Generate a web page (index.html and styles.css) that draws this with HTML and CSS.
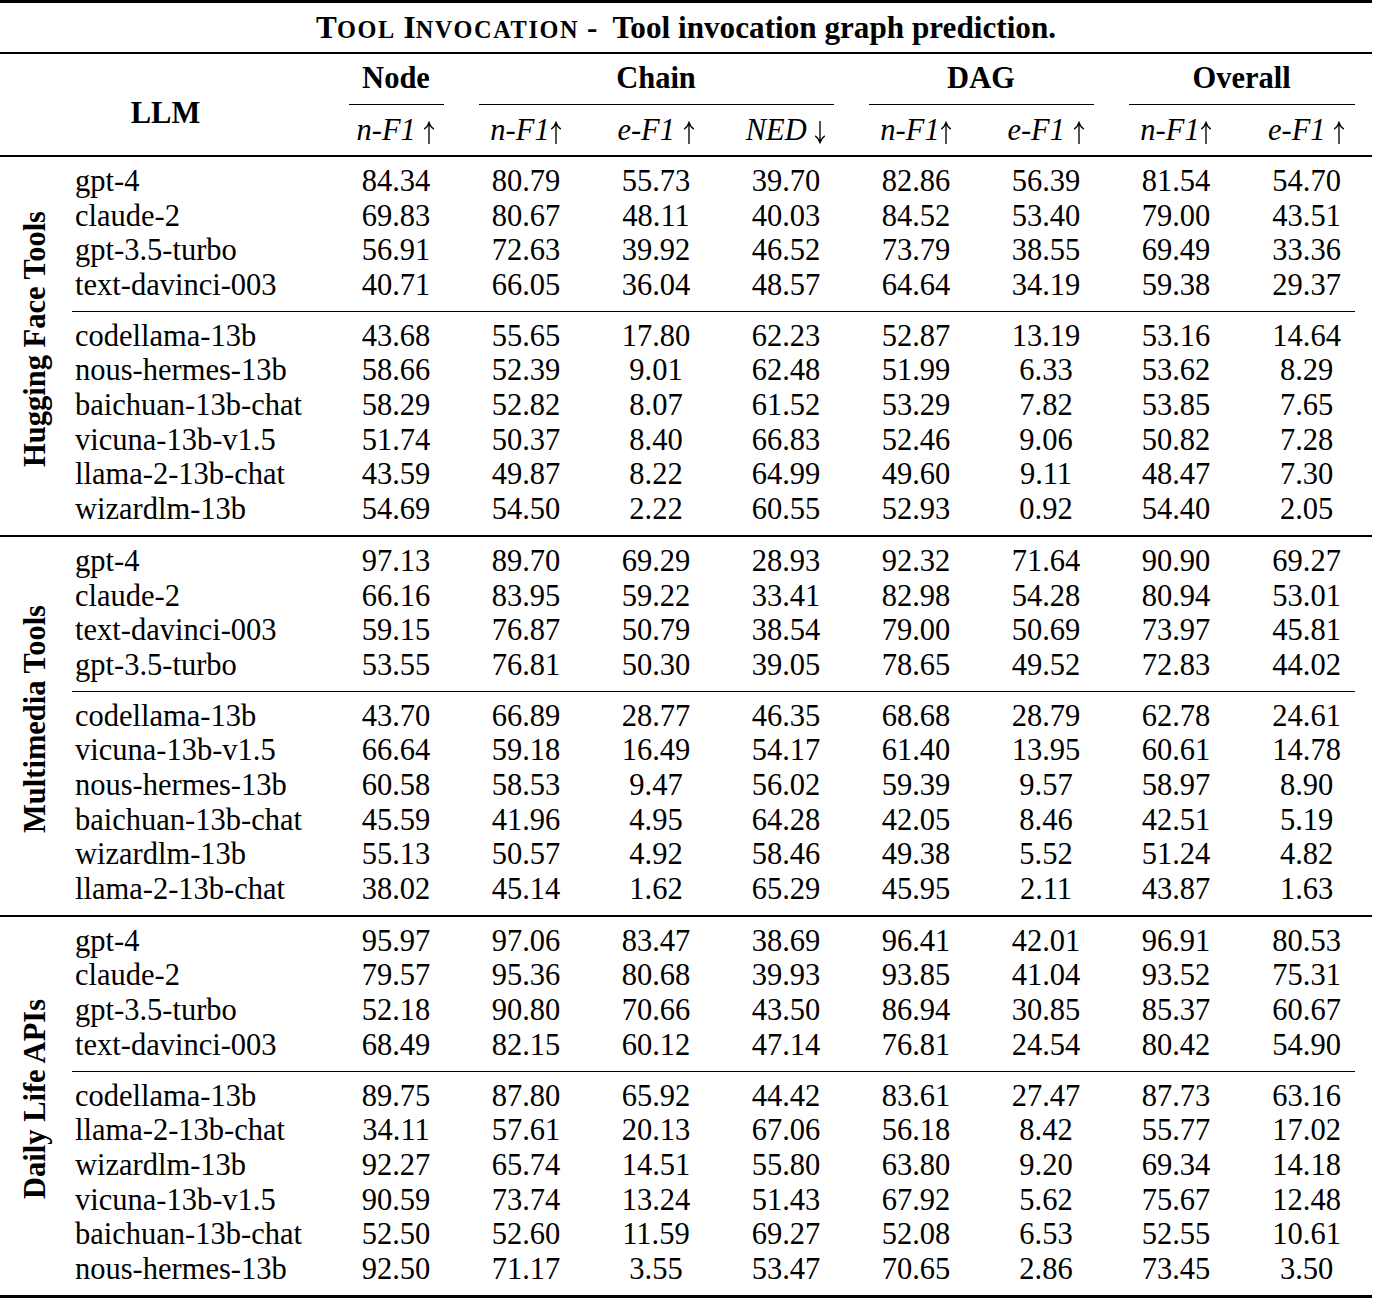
FILE: index.html
```html
<!DOCTYPE html>
<html lang="en">
<head>
    <meta charset="UTF-8">
    <meta name="viewport" content="width=device-width, initial-scale=1.0">
    <title>Tool Invocation - Tool invocation graph prediction</title>
    <link rel="stylesheet" href="styles.css">
</head>
<body>
    <table class="results">
        <colgroup>
            <col class="col-group">
            <col class="col-llm">
            <col class="col-num">
            <col class="col-num">
            <col class="col-num">
            <col class="col-num">
            <col class="col-num">
            <col class="col-num">
            <col class="col-num">
            <col class="col-last">
        </colgroup>
        <thead>
            <tr>
                <th class="title" colspan="10"><span class="sc">T<small>OOL</small> I<small>NVOCATION</small></span> -&nbsp; Tool invocation graph prediction.</th>
            </tr>
            <tr class="head-top">
                <th class="llm-head" colspan="2" rowspan="3">LLM</th>
                <th>Node</th>
                <th colspan="3">Chain</th>
                <th colspan="2">DAG</th>
                <th colspan="2">Overall</th>
            </tr>
            <tr class="cmid">
                <td><div class="trim"></div></td>
                <td colspan="3"><div class="trim"></div></td>
                <td colspan="2"><div class="trim"></div></td>
                <td colspan="2"><div class="trim"></div></td>
            </tr>
            <tr class="head-sub">
                <th><i>n-F1</i> <svg class="arrow" viewBox="0 0 12 24"><path d="M6 1.5V24M1 8.5C3.5 6.8 5 4.6 6 1.5C7 4.6 8.5 6.8 11 8.5"/></svg></th>
                <th><i>n-F1</i><svg class="arrow" viewBox="0 0 12 24"><path d="M6 1.5V24M1 8.5C3.5 6.8 5 4.6 6 1.5C7 4.6 8.5 6.8 11 8.5"/></svg></th>
                <th><i>e-F1</i> <svg class="arrow" viewBox="0 0 12 24"><path d="M6 1.5V24M1 8.5C3.5 6.8 5 4.6 6 1.5C7 4.6 8.5 6.8 11 8.5"/></svg></th>
                <th><i>NED</i> <svg class="arrow down" viewBox="0 0 12 24"><path d="M6 1.5V24M1 8.5C3.5 6.8 5 4.6 6 1.5C7 4.6 8.5 6.8 11 8.5"/></svg></th>
                <th><i>n-F1</i><svg class="arrow" viewBox="0 0 12 24"><path d="M6 1.5V24M1 8.5C3.5 6.8 5 4.6 6 1.5C7 4.6 8.5 6.8 11 8.5"/></svg></th>
                <th><i>e-F1</i> <svg class="arrow" viewBox="0 0 12 24"><path d="M6 1.5V24M1 8.5C3.5 6.8 5 4.6 6 1.5C7 4.6 8.5 6.8 11 8.5"/></svg></th>
                <th><i>n-F1</i><svg class="arrow" viewBox="0 0 12 24"><path d="M6 1.5V24M1 8.5C3.5 6.8 5 4.6 6 1.5C7 4.6 8.5 6.8 11 8.5"/></svg></th>
                <th><i>e-F1</i> <svg class="arrow" viewBox="0 0 12 24"><path d="M6 1.5V24M1 8.5C3.5 6.8 5 4.6 6 1.5C7 4.6 8.5 6.8 11 8.5"/></svg></th>
            </tr>
        </thead>

        <!-- Hugging Face Tools -->
        <tbody>
            <tr class="first">
                <td class="group" rowspan="11"><span>Hugging Face Tools</span></td>
                <td class="name">gpt-4</td><td>84.34</td><td>80.79</td><td>55.73</td><td>39.70</td><td>82.86</td><td>56.39</td><td>81.54</td><td>54.70</td>
            </tr>
            <tr>
                <td class="name">claude-2</td><td>69.83</td><td>80.67</td><td>48.11</td><td>40.03</td><td>84.52</td><td>53.40</td><td>79.00</td><td>43.51</td>
            </tr>
            <tr>
                <td class="name">gpt-3.5-turbo</td><td>56.91</td><td>72.63</td><td>39.92</td><td>46.52</td><td>73.79</td><td>38.55</td><td>69.49</td><td>33.36</td>
            </tr>
            <tr class="last">
                <td class="name">text-davinci-003</td><td>40.71</td><td>66.05</td><td>36.04</td><td>48.57</td><td>64.64</td><td>34.19</td><td>59.38</td><td>29.37</td>
            </tr>
            <tr class="midrule">
                <td colspan="9"><div class="line"></div></td>
            </tr>
            <tr class="first">
                <td class="name">codellama-13b</td><td>43.68</td><td>55.65</td><td>17.80</td><td>62.23</td><td>52.87</td><td>13.19</td><td>53.16</td><td>14.64</td>
            </tr>
            <tr>
                <td class="name">nous-hermes-13b</td><td>58.66</td><td>52.39</td><td>9.01</td><td>62.48</td><td>51.99</td><td>6.33</td><td>53.62</td><td>8.29</td>
            </tr>
            <tr>
                <td class="name">baichuan-13b-chat</td><td>58.29</td><td>52.82</td><td>8.07</td><td>61.52</td><td>53.29</td><td>7.82</td><td>53.85</td><td>7.65</td>
            </tr>
            <tr>
                <td class="name">vicuna-13b-v1.5</td><td>51.74</td><td>50.37</td><td>8.40</td><td>66.83</td><td>52.46</td><td>9.06</td><td>50.82</td><td>7.28</td>
            </tr>
            <tr>
                <td class="name">llama-2-13b-chat</td><td>43.59</td><td>49.87</td><td>8.22</td><td>64.99</td><td>49.60</td><td>9.11</td><td>48.47</td><td>7.30</td>
            </tr>
            <tr class="last end">
                <td class="name">wizardlm-13b</td><td>54.69</td><td>54.50</td><td>2.22</td><td>60.55</td><td>52.93</td><td>0.92</td><td>54.40</td><td>2.05</td>
            </tr>
        </tbody>

        <!-- Multimedia Tools -->
        <tbody>
            <tr class="first">
                <td class="group" rowspan="11"><span>Multimedia Tools</span></td>
                <td class="name">gpt-4</td><td>97.13</td><td>89.70</td><td>69.29</td><td>28.93</td><td>92.32</td><td>71.64</td><td>90.90</td><td>69.27</td>
            </tr>
            <tr>
                <td class="name">claude-2</td><td>66.16</td><td>83.95</td><td>59.22</td><td>33.41</td><td>82.98</td><td>54.28</td><td>80.94</td><td>53.01</td>
            </tr>
            <tr>
                <td class="name">text-davinci-003</td><td>59.15</td><td>76.87</td><td>50.79</td><td>38.54</td><td>79.00</td><td>50.69</td><td>73.97</td><td>45.81</td>
            </tr>
            <tr class="last">
                <td class="name">gpt-3.5-turbo</td><td>53.55</td><td>76.81</td><td>50.30</td><td>39.05</td><td>78.65</td><td>49.52</td><td>72.83</td><td>44.02</td>
            </tr>
            <tr class="midrule">
                <td colspan="9"><div class="line"></div></td>
            </tr>
            <tr class="first">
                <td class="name">codellama-13b</td><td>43.70</td><td>66.89</td><td>28.77</td><td>46.35</td><td>68.68</td><td>28.79</td><td>62.78</td><td>24.61</td>
            </tr>
            <tr>
                <td class="name">vicuna-13b-v1.5</td><td>66.64</td><td>59.18</td><td>16.49</td><td>54.17</td><td>61.40</td><td>13.95</td><td>60.61</td><td>14.78</td>
            </tr>
            <tr>
                <td class="name">nous-hermes-13b</td><td>60.58</td><td>58.53</td><td>9.47</td><td>56.02</td><td>59.39</td><td>9.57</td><td>58.97</td><td>8.90</td>
            </tr>
            <tr>
                <td class="name">baichuan-13b-chat</td><td>45.59</td><td>41.96</td><td>4.95</td><td>64.28</td><td>42.05</td><td>8.46</td><td>42.51</td><td>5.19</td>
            </tr>
            <tr>
                <td class="name">wizardlm-13b</td><td>55.13</td><td>50.57</td><td>4.92</td><td>58.46</td><td>49.38</td><td>5.52</td><td>51.24</td><td>4.82</td>
            </tr>
            <tr class="last end">
                <td class="name">llama-2-13b-chat</td><td>38.02</td><td>45.14</td><td>1.62</td><td>65.29</td><td>45.95</td><td>2.11</td><td>43.87</td><td>1.63</td>
            </tr>
        </tbody>

        <!-- Daily Life APIs -->
        <tbody>
            <tr class="first">
                <td class="group" rowspan="11"><span>Daily Life APIs</span></td>
                <td class="name">gpt-4</td><td>95.97</td><td>97.06</td><td>83.47</td><td>38.69</td><td>96.41</td><td>42.01</td><td>96.91</td><td>80.53</td>
            </tr>
            <tr>
                <td class="name">claude-2</td><td>79.57</td><td>95.36</td><td>80.68</td><td>39.93</td><td>93.85</td><td>41.04</td><td>93.52</td><td>75.31</td>
            </tr>
            <tr>
                <td class="name">gpt-3.5-turbo</td><td>52.18</td><td>90.80</td><td>70.66</td><td>43.50</td><td>86.94</td><td>30.85</td><td>85.37</td><td>60.67</td>
            </tr>
            <tr class="last">
                <td class="name">text-davinci-003</td><td>68.49</td><td>82.15</td><td>60.12</td><td>47.14</td><td>76.81</td><td>24.54</td><td>80.42</td><td>54.90</td>
            </tr>
            <tr class="midrule">
                <td colspan="9"><div class="line"></div></td>
            </tr>
            <tr class="first">
                <td class="name">codellama-13b</td><td>89.75</td><td>87.80</td><td>65.92</td><td>44.42</td><td>83.61</td><td>27.47</td><td>87.73</td><td>63.16</td>
            </tr>
            <tr>
                <td class="name">llama-2-13b-chat</td><td>34.11</td><td>57.61</td><td>20.13</td><td>67.06</td><td>56.18</td><td>8.42</td><td>55.77</td><td>17.02</td>
            </tr>
            <tr>
                <td class="name">wizardlm-13b</td><td>92.27</td><td>65.74</td><td>14.51</td><td>55.80</td><td>63.80</td><td>9.20</td><td>69.34</td><td>14.18</td>
            </tr>
            <tr>
                <td class="name">vicuna-13b-v1.5</td><td>90.59</td><td>73.74</td><td>13.24</td><td>51.43</td><td>67.92</td><td>5.62</td><td>75.67</td><td>12.48</td>
            </tr>
            <tr>
                <td class="name">baichuan-13b-chat</td><td>52.50</td><td>52.60</td><td>11.59</td><td>69.27</td><td>52.08</td><td>6.53</td><td>52.55</td><td>10.61</td>
            </tr>
            <tr class="last end">
                <td class="name">nous-hermes-13b</td><td>92.50</td><td>71.17</td><td>3.55</td><td>53.47</td><td>70.65</td><td>2.86</td><td>73.45</td><td>3.50</td>
            </tr>
        </tbody>
    </table>
</body>
</html>
```

FILE: styles.css
```css
* {
    margin: 0;
    padding: 0;
    box-sizing: border-box;
}

body {
    font-family: "Liberation Serif", "Times New Roman", serif;
    font-size: 30.5px;
    color: #000;
    background: #fff;
}

.results {
    width: 1372px;
    table-layout: fixed;
    border-collapse: separate;
    border-spacing: 0;
}

.col-group { width: 70px; }
.col-llm { width: 261px; }
.col-num { width: 130px; }
.col-last { width: 131px; }

.results th,
.results td {
    padding: 0;
    line-height: 34.6px;
    font-weight: normal;
    text-align: center;
    white-space: nowrap;
}

/* caption row */
.results .title {
    font-size: 31.2px;
    line-height: 49px;
    font-weight: bold;
    border-top: 3px solid #000;
    border-bottom: 2px solid #000;
}

/* hand-made small caps, LaTeX style (bigger than the browser's) */
.title .sc small {
    font-size: 0.78em;
    line-height: 1;
    letter-spacing: 1.6px;
}

/* header rows */
.results .head-top th {
    line-height: 49px;
    font-weight: bold;
}

.results .llm-head {
    padding-top: 17px;
    vertical-align: middle;
    border-bottom: 2px solid #000;
}

.results .cmid td {
    line-height: 0;
    font-size: 0;
}

.trim {
    height: 1px;
    margin: 1px 17px 0 18px;
    background: #000;
}

.results .head-sub th {
    line-height: 50px;
    border-bottom: 2px solid #000;
}

.head-sub i {
    font-style: italic;
}

.arrow {
    width: 12px;
    height: 23px;
    vertical-align: -4px;
    fill: none;
    stroke: #000;
    stroke-width: 1.4;
}

.arrow.down {
    transform: rotate(180deg);
}

/* body rows */
.results .name {
    text-align: left;
    padding-left: 5px;
}

.results .first td {
    padding-top: 7px;
}

.results .last td {
    padding-bottom: 8.5px;
}

.results .end td {
    border-bottom: 2px solid #000;
}

.results .midrule td {
    line-height: 0;
    font-size: 0;
}

.midrule .line {
    height: 1px;
    margin: 0 17px 0 2px;
    background: #000;
}

.results td.group {
    padding: 0 0 14px;
    vertical-align: middle;
    border-bottom: 2px solid #000;
}

.group span {
    display: inline-block;
    vertical-align: middle;
    writing-mode: vertical-rl;
    transform: rotate(180deg);
    font-weight: bold;
    line-height: 1;
}

.results tbody:last-child .end td,
.results tbody:last-child td.group {
    border-bottom-width: 3px;
}
```
